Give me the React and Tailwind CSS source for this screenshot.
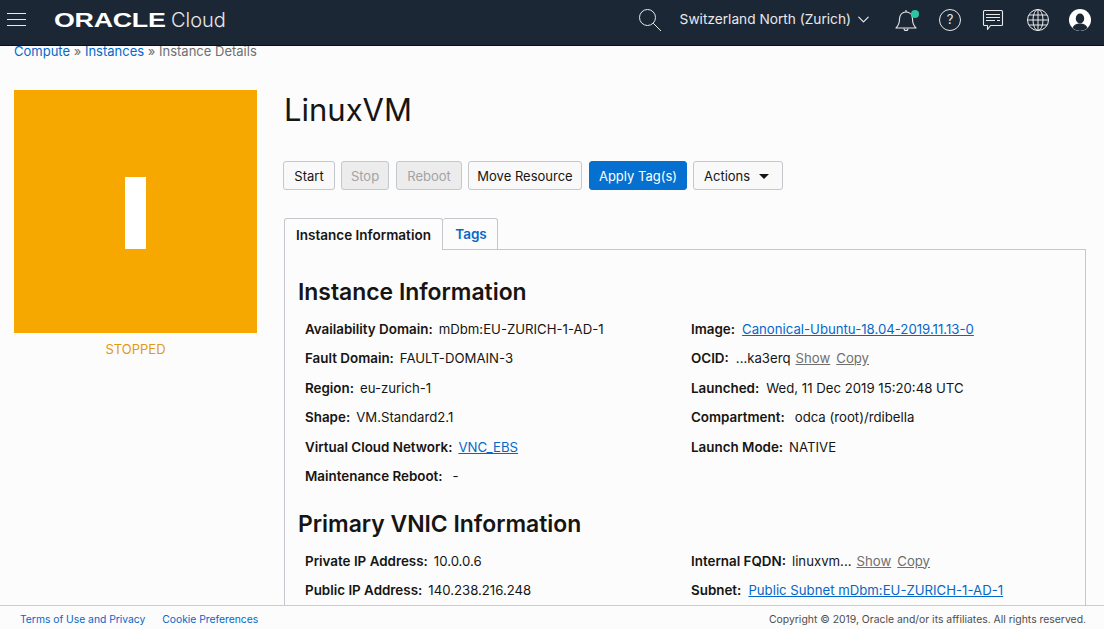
import React from 'react';
import { ChevronDown } from 'lucide-react';

const linkCls = "text-[#0568c9]";

const Row = ({ label, gap = "ml-[6px]", children }) => (
    <div className="h-[29.5px] leading-[29.5px] flex items-baseline whitespace-nowrap">
        <span className="font-semibold text-[13.4px] text-[#161513]">{label}:</span>
        <span className={`${gap} flex items-baseline text-[13.2px] text-[#161513]`}>{children}</span>
    </div>
);

const Btn = ({ children, cls = "" }) => (
    <button className={`h-[29px] pt-[2px] rounded-[3px] border border-[#c4c7cb] bg-[#f9f9f9] text-[13px] text-[#161513] flex items-center justify-center ${cls}`}>
        {children}
    </button>
);

const Header = () => (
    <div className="h-[46px] shrink-0 bg-[#1c2735] border-b border-[#0c1118] flex items-center pb-[6px] text-white">
        <div className="ml-[7px] w-[19px] flex flex-col gap-[5px]">
            <div className="h-px bg-[#e8e9eb]" />
            <div className="h-px bg-[#e8e9eb]" />
            <div className="h-px bg-[#e8e9eb]" />
        </div>
        <div className="ml-[28px] flex items-center">
            <span className="w-[112px] text-[20px] leading-none font-semibold text-white origin-left scale-x-[1.34] tracking-[-0.2px] [font-family:'Liberation_Sans',sans-serif]">ORACLE</span>
            <span className="ml-[5px] text-[20px] leading-none font-light text-[#e8e9eb]">Cloud</span>
        </div>
        <div className="flex-1" />
        <svg viewBox="0 0 24 24" className="w-[24px] h-[24px]" fill="none" stroke="#e8e9eb" strokeWidth="1">
            <circle cx="9.500" cy="9.500" r="8" />
            <path d="M15.200 15.200L23 23" />
        </svg>
        <span className="ml-[18px] text-[13.7px] text-[#e8e9eb]">Switzerland North (Zurich)</span>
        <ChevronDown size={19} strokeWidth={1.5} className="ml-[3px] text-[#e8e9eb]" />
        {/* bell */}
        <div className="ml-[22px] relative w-[22px] h-[24px]">
            <svg viewBox="0 0 22 24" className="w-full h-full" fill="none" stroke="#e8e9eb" strokeWidth="1.1">
                <path d="M1 20h20c-2-2-3.500-4-3.500-9 0-4-2.500-7-6.500-7s-6.500 3-6.500 7c0 5-1.500 7-3.500 9z" strokeLinejoin="round" />
                <path d="M9 20.500a2 2 0 0 0 4 0M11 4V2" />
            </svg>
            <span className="absolute top-[2px] right-[-2px] w-[8px] h-[8px] rounded-full bg-[#2ec4a3]" />
        </div>
        {/* help */}
        <div className="ml-[22px] w-[22px] h-[22px] rounded-full border border-[#e8e9eb] flex items-center justify-center text-[13px] text-[#e8e9eb]">?</div>
        {/* chat */}
        <svg viewBox="0 0 22 22" className="ml-[21px] w-[22px] h-[22px]" fill="none" stroke="#e8e9eb" strokeWidth="1.100">
            <path d="M2.500 1.500h17a1 1 0 0 1 1 1v13a1 1 0 0 1-1 1H8.500l-3 4v-4h-3a1 1 0 0 1-1-1v-13a1 1 0 0 1 1-1z" strokeLinejoin="round" />
            <path d="M4 5.500h14M4 8.500h14M4 11.500h9M15 11.500h3" />
        </svg>
        {/* globe */}
        <svg viewBox="0 0 24 24" className="ml-[22px] w-[24px] h-[24px]" fill="none" stroke="#e8e9eb" strokeWidth="1">
            <circle cx="12" cy="12" r="10.500" />
            <ellipse cx="12" cy="12" rx="5" ry="10.500" />
            <path d="M12 1.500v21M1.500 12h21M3 7h18M3 17h18" />
        </svg>
        {/* avatar */}
        <svg viewBox="0 0 22 22" className="ml-[19px] mr-[13px] w-[22px] h-[22px]">
            <circle cx="11" cy="11" r="11" fill="#ffffff" />
            <ellipse cx="11" cy="9.500" rx="4.200" ry="5" fill="#1c2735" />
            <path d="M3.500 19c1.500-3.500 4-4.500 7.500-4.500s6 1 7.500 4.500a11 11 0 0 1-15 0z" fill="#1c2735" />
        </svg>
    </div>
);

const Sidebar = () => (
    <div className="w-[243px] shrink-0">
        <div className="h-[243px] bg-[#f7a800] flex items-center justify-center">
            <div className="w-[21px] h-[72px] bg-white mt-[2px]" />
        </div>
        <div className="mt-[7px] text-center text-[13px] leading-[18px] text-[#e29a12]">STOPPED</div>
    </div>
);

const Content = () => (
    <div className="ml-[27px] flex-1 min-w-0">
        <h1 className="h-[40px] mt-0 text-[31px] leading-[40px] font-normal text-[#161513]">LinuxVM</h1>
        <div className="mt-[31px] -ml-px flex items-center">
            <Btn cls="w-[52px]">Start</Btn>
            <Btn cls="ml-[6px] w-[48px] !bg-[#ececec] !text-[#a3a3a3]">Stop</Btn>
            <Btn cls="ml-[7px] w-[66px] !bg-[#ececec] !text-[#a3a3a3]">Reboot</Btn>
            <Btn cls="ml-[6px] w-[114px]">Move Resource</Btn>
            <Btn cls="ml-[7px] w-[98px] !bg-[#0570cf] !border-[#0570cf] !text-white">Apply Tag(s)</Btn>
            <Btn cls="ml-[6px] w-[90px] !justify-start pl-[10px]">
                Actions
                <span className="ml-[9px] w-0 h-0 border-x-[5px] border-x-transparent border-t-[5px] border-t-[#161513]" />
            </Btn>
        </div>
        {/* tabs */}
        <div className="mt-[28px] flex items-end h-[32px] relative z-10">
            <div className="h-[32px] pt-px w-[159px] border border-b-0 border-[#c4c7cb] rounded-t-[3px] bg-[#fcfcfc] flex items-center justify-center text-[13.5px] font-semibold text-[#161513]">Instance Information</div>
            <div className="h-[32px] pt-px pl-[2px] w-[55px] border border-l-0 border-[#c4c7cb] rounded-t-[3px] bg-[#fcfcfc] flex items-center justify-center text-[13.5px] font-semibold text-[#0568c9]">Tags</div>
        </div>
        <div className="mr-[18px] -mt-px border border-[#c4c7cb] pl-[13px] pt-[27px]">
            <h2 className="text-[22.9px] leading-[30px] font-semibold text-[#161513]">Instance Information</h2>
            <div className="mt-[7.5px] pl-[7px] grid grid-cols-[386px_1fr]">
                <div>
                    <Row label="Availability Domain">mDbm:EU-ZURICH-1-AD-1</Row>
                    <Row label="Fault Domain">FAULT-DOMAIN-3</Row>
                    <Row label="Region">eu-zurich-1</Row>
                    <Row label="Shape">VM.Standard2.1</Row>
                    <Row label="Virtual Cloud Network"><a className={`${linkCls} underline`}>VNC_EBS</a></Row>
                    <Row label="Maintenance Reboot" gap="ml-[10px]">-</Row>
                </div>
                <div>
                    <Row label="Image" gap="ml-[7px]"><a className={`${linkCls} underline`}>Canonical-Ubuntu-18.04-2019.11.13-0</a></Row>
                    <Row label="OCID" gap="ml-[7px]">...ka3erq<a className="ml-[5px] text-[#6f6f6f] underline">Show</a><a className="ml-[6px] text-[#6f6f6f] underline">Copy</a></Row>
                    <Row label="Launched" gap="ml-[7px]">Wed, 11 Dec 2019 15:20:48 UTC</Row>
                    <Row label="Compartment" gap="ml-[10px]">odca (root)/rdibella</Row>
                    <Row label="Launch Mode">NATIVE</Row>
                </div>
            </div>
            <h2 className="mt-[17.5px] text-[22.9px] leading-[30px] font-semibold text-[#161513]">Primary VNIC Information</h2>
            <div className="mt-[7.5px] pl-[7px] grid grid-cols-[386px_1fr]">
                <div>
                    <Row label="Private IP Address">10.0.0.6</Row>
                    <Row label="Public IP Address">140.238.216.248</Row>
                </div>
                <div>
                    <Row label="Internal FQDN">linuxvm...<a className="ml-[5px] text-[#6f6f6f] underline">Show</a><a className="ml-[6px] text-[#6f6f6f] underline">Copy</a></Row>
                    <Row label="Subnet" gap="ml-[7px]"><a className={`${linkCls} underline`}>Public Subnet mDbm:EU-ZURICH-1-AD-1</a></Row>
                </div>
            </div>
        </div>
    </div>
);

export default function App() {
    return (
        <div className="h-[629px] w-[1104px] flex flex-col overflow-hidden bg-[#fcfcfc] [font-family:Inter,sans-serif]">
            <Header />
            <div className="flex-1 min-h-0 overflow-hidden">
                {/* breadcrumb runs under the header, page is slightly scrolled */}
                <div className="h-[10px] pl-[14px] text-[13px] leading-[10px] whitespace-nowrap overflow-visible">
                    <a className={linkCls}>Compute</a>
                    <span className="text-[#6f6f6f]"> » </span>
                    <a className={linkCls}>Instances</a>
                    <span className="text-[#6f6f6f]"> » Instance Details</span>
                </div>
                <div className="mt-[34px] pl-[14px] flex items-start">
                    <Sidebar />
                    <Content />
                </div>
            </div>
            <div className="h-[24px] shrink-0 border-t border-[#c9ccd0] bg-[#fcfcfc] flex items-center justify-between pl-[20px] pr-[18px] pt-[4px] text-[10.3px]">
                <div className="flex items-center gap-[17px]">
                    <a className={linkCls}>Terms of Use and Privacy</a>
                    <a className={linkCls}>Cookie Preferences</a>
                </div>
                <span className="text-[10.4px] text-[#4d4d4d]">Copyright © 2019, Oracle and/or its affiliates. All rights reserved.</span>
            </div>
        </div>
    );
}
